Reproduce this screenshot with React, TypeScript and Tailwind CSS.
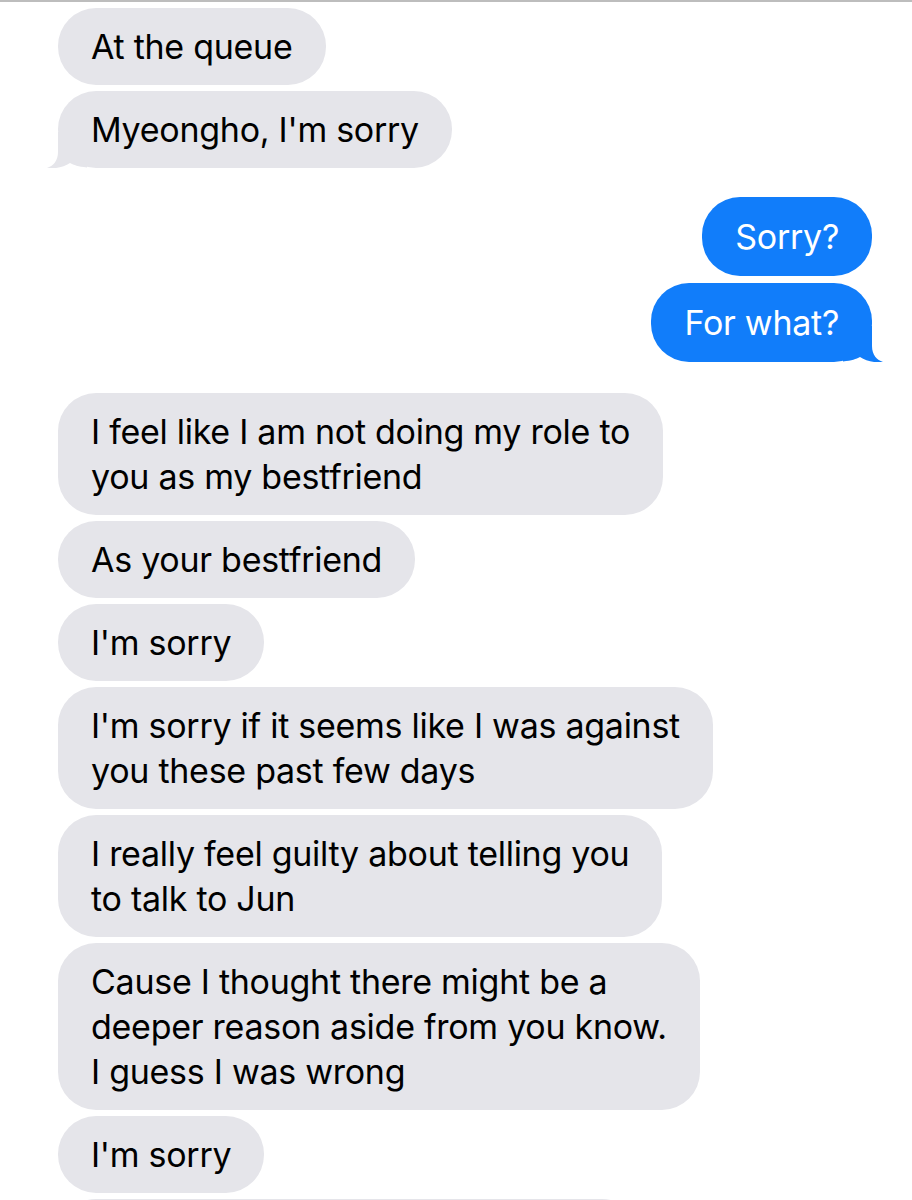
import React from 'react'

type Msg = { text: string; me?: boolean; tail?: boolean; gap?: string }

const MESSAGES: Msg[] = [
  { text: 'At the queue', gap: 'mt-0' },
  { text: "Myeongho, I'm sorry", tail: true },
  { text: 'Sorry?', me: true, gap: 'mt-[29px]' },
  { text: 'For what?', me: true, tail: true, gap: 'mt-[7px]' },
  { text: 'I feel like I am not doing my role to\nyou as my bestfriend', gap: 'mt-[31px]' },
  { text: 'As your bestfriend' },
  { text: "I'm sorry" },
  { text: "I'm sorry if it seems like I was against\nyou these past few days" },
  { text: 'I really feel guilty about telling you\nto talk to Jun' },
  { text: 'Cause I thought there might be a\ndeeper reason aside from you know.\nI guess I was wrong' },
  { text: "I'm sorry" },
]

function Tail({ me }: { me?: boolean }) {
  // drawn for the left side, mirrored for the right
  return (
    <svg
      width="40"
      height="36"
      viewBox="0 0 40 36"
      className={`absolute bottom-0 ${me ? '-right-[11px] -scale-x-100' : '-left-[11px]'}`}
    >
      <path
        d="M11 0 L11 20 C11 29 6 34 0 36 C9 37 17 35 23 31 C27 33 31 34.5 40 35.5 L40 0 Z"
        className={me ? 'fill-[#117dfa]' : 'fill-[#e5e5ea]'}
      />
    </svg>
  )
}

function Bubble({ msg }: { msg: Msg }) {
  return (
    <div className={`flex ${msg.me ? 'justify-end' : 'justify-start'} ${msg.gap ?? 'mt-[6px]'}`}>
      <div
        className={`relative whitespace-pre-line rounded-[38px] px-[33px] text-[34px] leading-[45px] tracking-[-0.008em] ${
          msg.me ? 'bg-[#117dfa] text-white py-[17px]' : 'bg-[#e5e5ea] text-black py-[16px]'
        }`}
      >
        {msg.tail && <Tail me={msg.me} />}
        <span className="relative">{msg.text}</span>
      </div>
    </div>
  )
}

export default function App() {
  return (
    <div
      className="h-[1200px] overflow-hidden bg-white border-t-2 border-[#bdbdbd]"
      style={{ fontFamily: 'Inter, "Noto Sans", sans-serif' }}
    >
      <div className="flex flex-col pl-[58px] pr-[40px] pt-[6px]">
        {MESSAGES.map((m, i) => (
          <Bubble key={i} msg={m} />
        ))}
        {/* next message, cut off by the bottom edge */}
        <div className="mt-[6px] h-[77px] w-[582px] shrink-0 rounded-[38px] bg-[#e5e5ea]" />
      </div>
    </div>
  )
}
